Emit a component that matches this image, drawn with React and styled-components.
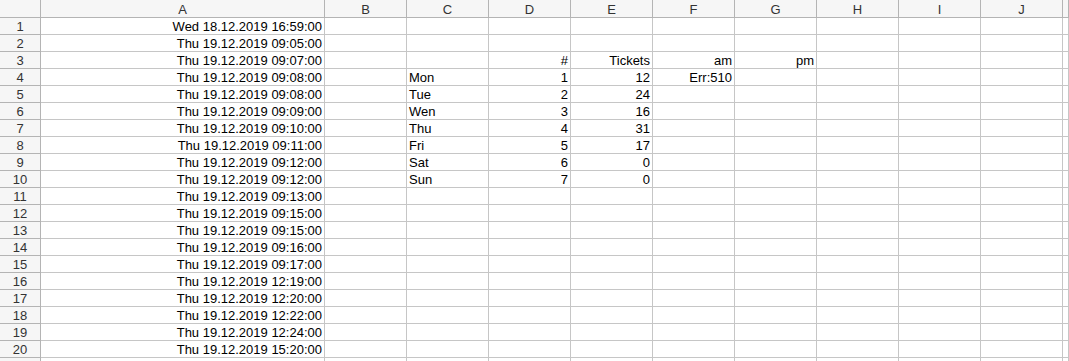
import styled, { createGlobalStyle } from 'styled-components';

const GlobalStyle = createGlobalStyle`
    html, body {
        margin: 0;
        background: #fff;
        overflow: hidden;
    }
    * {
        box-sizing: border-box;
    }
`;

const Sheet = styled.div`
    display: grid;
    grid-template-columns: 41px 284px repeat(9, 82px) 1fr;
    grid-template-rows: 18px;
    grid-auto-rows: 17px;
    width: 1069px;
    height: 361px;
    overflow: hidden;
    font-family: "Liberation Sans", Arial, sans-serif;
    font-size: 13px;
`;

const Head = styled.div`
    background: #f6f6f6;
    border-right: 1px solid #b4b4b4;
    border-bottom: 1px solid #b4b4b4;
    color: #333;
    display: flex;
    align-items: center;
    justify-content: center;
    line-height: 1;
    padding-top: 1px;
`;

const Cell = styled.div`
    border-right: 1px solid #c6c6c6;
    border-bottom: 1px solid #c6c6c6;
    color: #000;
    display: flex;
    align-items: center;
    justify-content: ${(p) => (p.$left ? 'flex-start' : 'flex-end')};
    padding: 1px 2px 0 2px;
    white-space: nowrap;
    overflow: hidden;
    line-height: 1;
`;

const columns = ['A', 'B', 'C', 'D', 'E', 'F', 'G', 'H', 'I', 'J', ''];

const times = [
    'Wed 18.12.2019 16:59:00',
    'Thu 19.12.2019 09:05:00',
    'Thu 19.12.2019 09:07:00',
    'Thu 19.12.2019 09:08:00',
    'Thu 19.12.2019 09:08:00',
    'Thu 19.12.2019 09:09:00',
    'Thu 19.12.2019 09:10:00',
    'Thu 19.12.2019 09:11:00',
    'Thu 19.12.2019 09:12:00',
    'Thu 19.12.2019 09:12:00',
    'Thu 19.12.2019 09:13:00',
    'Thu 19.12.2019 09:15:00',
    'Thu 19.12.2019 09:15:00',
    'Thu 19.12.2019 09:16:00',
    'Thu 19.12.2019 09:17:00',
    'Thu 19.12.2019 12:19:00',
    'Thu 19.12.2019 12:20:00',
    'Thu 19.12.2019 12:22:00',
    'Thu 19.12.2019 12:24:00',
    'Thu 19.12.2019 15:20:00',
];

// row index -> { col: value }
const table = {
    3: { D: '#', E: 'Tickets', F: 'am', G: 'pm' },
    4: { C: 'Mon', D: '1', E: '12', F: 'Err:510' },
    5: { C: 'Tue', D: '2', E: '24' },
    6: { C: 'Wen', D: '3', E: '16' },
    7: { C: 'Thu', D: '4', E: '31' },
    8: { C: 'Fri', D: '5', E: '17' },
    9: { C: 'Sat', D: '6', E: '0' },
    10: { C: 'Sun', D: '7', E: '0' },
};

const App = () => {
    return (
        <>
            <GlobalStyle />
            <Sheet>
                <Head />
                {columns.map((c, i) => (
                    <Head key={i}>{c}</Head>
                ))}
                {times.map((t, r) => {
                    const row = r + 1;
                    const data = table[row] || {};
                    return [
                        <Head key={`h${row}`}>{row}</Head>,
                        ...columns.map((c, i) => (
                            <Cell key={`${row}-${i}`} $left={c === 'C'}>
                                {c === 'A' ? t : data[c]}
                            </Cell>
                        )),
                    ];
                })}
                <Head />
                {columns.map((c, i) => (
                    <Cell key={`x${i}`} />
                ))}
            </Sheet>
        </>
    );
};

export default App;
